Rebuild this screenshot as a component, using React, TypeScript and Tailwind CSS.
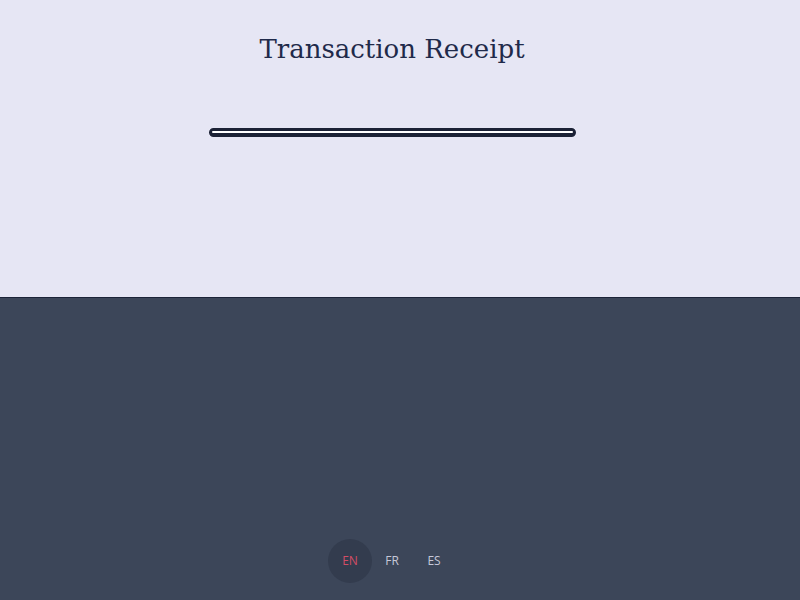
export default function App() {
  return (
    <div className="flex h-[600px] w-[800px] flex-col overflow-hidden">
      {/* Header */}
      <div className="flex h-[297px] flex-col items-center bg-[#e6e6f4] pr-[16px]">
        <h1 className="mt-[31px] font-['DejaVu_Serif',serif] text-[26px] leading-[36px] text-[#1f2a4a]">
          Transaction Receipt
        </h1>
        <div className="mt-[61px] flex h-[9px] w-[367px] flex-col overflow-hidden rounded-full border-2 border-[#1c2236] bg-[#1c2236] pt-px">
          <div className="mx-px h-[2px] rounded-full bg-white" />
        </div>
      </div>

      {/* Footer */}
      <div className="flex flex-1 flex-col items-center justify-end border-t border-[#1c2338] bg-[#3c4659] pb-[17px] pr-[16px]">
        <div className="flex items-center font-['Open_Sans',sans-serif] text-[12px]">
          <button className="flex h-[44px] w-[44px] items-center justify-center rounded-full bg-[#333c4e] text-[#d24d66]">
            EN
          </button>
          <button className="flex h-[44px] w-[40px] items-center justify-center text-[#c6c8d8]">
            FR
          </button>
          <button className="flex h-[44px] w-[44px] items-center justify-center text-[#c6c8d8]">
            ES
          </button>
        </div>
      </div>
    </div>
  );
}
